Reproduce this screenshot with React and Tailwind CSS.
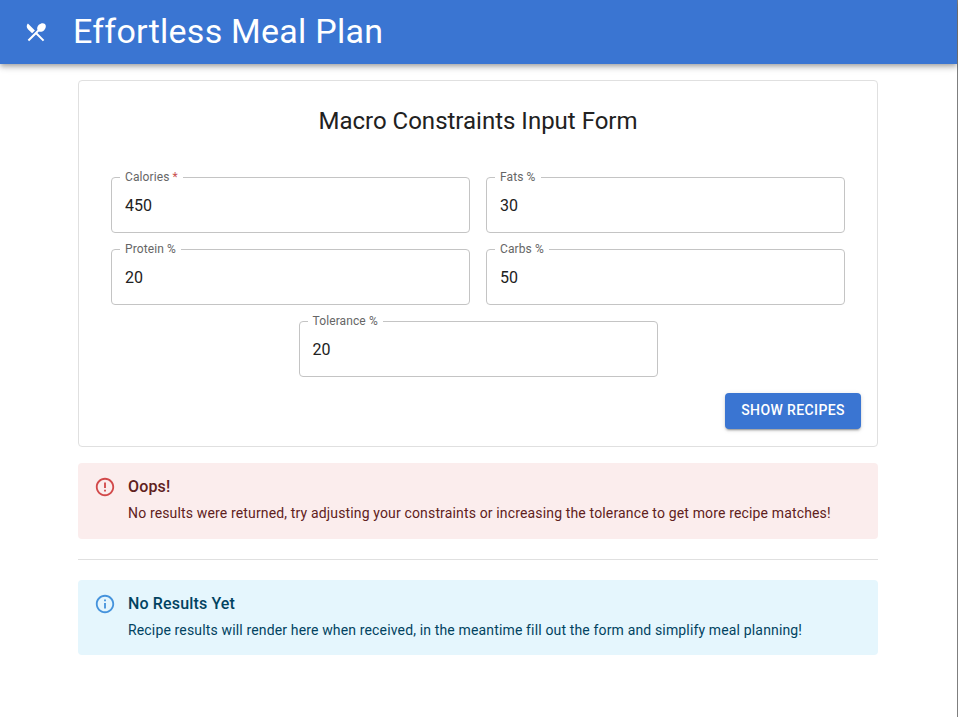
import React from 'react';

const BLUE = 'bg-[#3a75d2]';

const LocalDining = ({ className = '' }) => (
  <svg viewBox="0 0 24 24" className={className} fill="currentColor">
    <path d="m8.1 13.34 2.83-2.83L3.91 3.5c-1.56 1.56-1.56 4.09 0 5.66zm6.78-1.81c1.53.71 3.68.21 5.27-1.38 1.91-1.91 2.28-4.65.81-6.12-1.46-1.46-4.2-1.1-6.12.81-1.59 1.59-2.09 3.74-1.38 5.27L3.7 19.87l1.41 1.41L12 14.41l6.88 6.88 1.41-1.41L13.41 13z" />
  </svg>
);

const ErrorOutline = ({ className = '' }) => (
  <svg viewBox="0 0 24 24" className={className} fill="currentColor">
    <path d="M11 15h2v2h-2zm0-8h2v6h-2zm.99-5C6.47 2 2 6.48 2 12s4.47 10 9.99 10C17.52 22 22 17.52 22 12S17.52 2 11.99 2M12 20c-4.42 0-8-3.58-8-8s3.58-8 8-8 8 3.58 8 8-3.58 8-8 8" />
  </svg>
);

const InfoOutline = ({ className = '' }) => (
  <svg viewBox="0 0 24 24" className={className} fill="currentColor">
    <path d="M11 7h2v2h-2zm0 4h2v6h-2zm1-9C6.48 2 2 6.48 2 12s4.48 10 10 10 10-4.48 10-10S17.52 2 12 2m0 18c-4.41 0-8-3.59-8-8s3.59-8 8-8 8 3.59 8 8-3.59 8-8 8" />
  </svg>
);

// outlined field, the label sits over the top border
const Field = ({ label, value, required = false }) => (
  <div className="relative flex h-[56px] w-[359px] items-center rounded border border-[#c4c4c4] px-[13px] pt-[2px]">
    <span className="absolute left-[8px] top-[-8px] bg-white px-[5px] text-[12px] leading-[14px] tracking-[0.11px] text-[#666666]">
      {label}
      {required && <span className="text-[#c9504f]"> *</span>}
    </span>
    <span className="text-[16px] leading-[24px] text-[#212121]">{value}</span>
  </div>
);

const Alert = ({ icon, title, body, bg, fg, iconColor, className = '' }) => (
  <div className={`flex rounded px-4 py-[6px] ${bg} ${fg} ${className}`}>
    <div className={`mr-3 py-[7px] ${iconColor}`}>{icon}</div>
    <div className="pb-[10px] pt-[6px]">
      <div className="mb-[4px] text-[16px] font-medium leading-[24px] tracking-[0.15px]">{title}</div>
      <div className="text-[14px] leading-[20px] tracking-[0.15px]">{body}</div>
    </div>
  </div>
);

export default function App() {
  return (
    <div className="min-h-[717px] border-r border-[#7f7f7f] bg-white font-['Roboto',sans-serif]">
      <header className={`relative z-10 flex h-[64px] items-center px-6 text-white shadow-[0_2px_4px_-1px_rgba(0,0,0,0.2),0_4px_5px_0_rgba(0,0,0,0.14),0_1px_10px_0_rgba(0,0,0,0.12)] ${BLUE}`}>
        <LocalDining className="h-6 w-6" />
        <h1 className="mb-[2px] ml-[25px] text-[34px] leading-[42px] tracking-[0.25px]">Effortless Meal Plan</h1>
      </header>

      <main className="ml-[78px] w-[800px] pt-4">
        <section className="rounded border border-[#e0e0e0] px-4 pb-[17px] pt-[16px]">
          <h2 className="mb-[38px] mt-[6px] text-center text-[24px] leading-[36px] text-[#212121]">
            Macro Constraints Input Form
          </h2>
          <div className="flex flex-col items-center gap-[16px]">
            <div className="flex gap-4">
              <Field label="Calories" value="450" required />
              <Field label="Fats %" value="30" />
            </div>
            <div className="flex gap-4">
              <Field label="Protein %" value="20" />
              <Field label="Carbs %" value="50" />
            </div>
            <Field label="Tolerance %" value="20" />
          </div>
          <div className="mt-4 flex justify-end">
            <button className={`h-[36px] rounded px-4 pb-[2px] text-[14px] font-medium uppercase tracking-[0.4px] text-white shadow-[0_3px_1px_-2px_rgba(0,0,0,0.2),0_2px_2px_0_rgba(0,0,0,0.14),0_1px_5px_0_rgba(0,0,0,0.12)] ${BLUE}`}>
              Show Recipes
            </button>
          </div>
        </section>

        <Alert
          className="mt-4"
          bg="bg-[#fbeded]"
          fg="text-[#5f2120]"
          iconColor="text-[#d2494a]"
          icon={<ErrorOutline className="h-[22px] w-[22px]" />}
          title="Oops!"
          body="No results were returned, try adjusting your constraints or increasing the tolerance to get more recipe matches!"
        />

        <hr className="my-5 border-[#e0e0e0]" />

        <Alert
          className="h-[75px]"
          bg="bg-[#e5f6fd]"
          fg="text-[#014361]"
          iconColor="text-[#4593dc]"
          icon={<InfoOutline className="h-[22px] w-[22px]" />}
          title="No Results Yet"
          body="Recipe results will render here when received, in the meantime fill out the form and simplify meal planning!"
        />
      </main>
    </div>
  );
}
